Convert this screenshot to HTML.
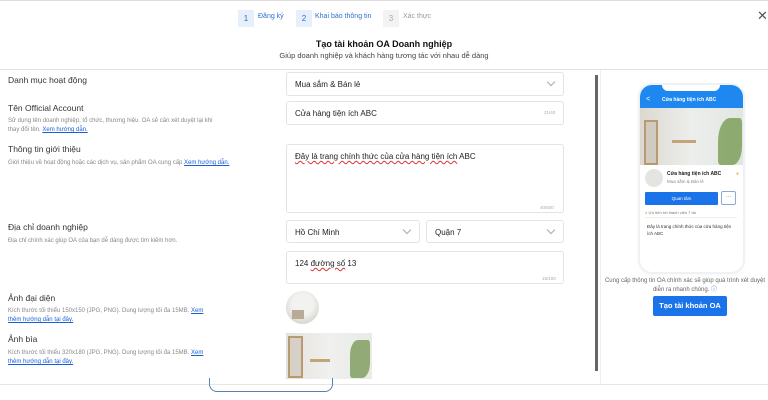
<!DOCTYPE html>
<html><head><meta charset="utf-8"><style>
*{margin:0;padding:0;box-sizing:border-box}
body{width:768px;height:400px;overflow:hidden;background:#fff;font-family:"Liberation Sans","Noto Sans CJK SC",sans-serif;color:#333;position:relative}
.a{position:absolute}
.lbl{font-size:8.5px;color:#333}
.desc{font-size:6px;color:#888;line-height:9px}
.desc u{color:#1a5fd6}
.box{border:1px solid #e3e3e3;border-radius:3px;background:#fff}
.txt{font-size:8px;color:#222}
.chev{width:6px;height:6px;border-right:1px solid #aaa;border-bottom:1px solid #aaa;transform:rotate(45deg)}
.cnt{font-size:4.5px;color:#aaa}
.wavy{text-decoration:underline wavy #d33;text-decoration-thickness:0.6px}
.sb{position:absolute;top:10px;width:16px;height:17px;font-size:8px;text-align:center;line-height:17px}
.st{position:absolute;top:13px;font-size:7px}
</style></head><body>
<div class="a" style="left:0;top:0;width:768px;height:1px;background:#ddd"></div>
<!-- steps -->
<div class="sb" style="left:238px;background:#e6f0fb;color:#2e6fd0">1</div>
<div class="st" style="left:258px;color:#2e6fd0">Đăng ký</div>
<div class="sb" style="left:296px;background:#e6f0fb;color:#2e6fd0">2</div>
<div class="st" style="left:315px;color:#2e6fd0">Khai báo thông tin</div>
<div class="sb" style="left:383px;background:#f3f3f3;color:#aaa">3</div>
<div class="st" style="left:403px;color:#999">Xác thực</div>
<div class="a" style="left:757px;top:8px;font-size:13px;color:#555">✕</div>
<div class="a" style="left:0;top:39px;width:768px;text-align:center;font-size:9px;font-weight:bold;color:#111">Tạo tài khoản OA Doanh nghiệp</div>
<div class="a" style="left:0;top:51px;width:768px;text-align:center;font-size:7.5px;color:#444">Giúp doanh nghiệp và khách hàng tương tác với nhau dễ dàng</div>
<div class="a" style="left:0;top:69px;width:768px;height:1px;background:#e0e0e0"></div>
<!-- left form -->
<div class="a lbl" style="left:8px;top:75px">Danh mục hoạt động</div>
<div class="a box" style="left:286px;top:72px;width:278px;height:24px"></div>
<div class="a txt" style="left:295px;top:80px">Mua sắm &amp; Bán lẻ</div>
<div class="a chev" style="left:548px;top:79px"></div>

<div class="a lbl" style="left:8px;top:103px">Tên Official Account</div>
<div class="a desc" style="left:8px;top:117px;width:215px">Sử dụng tên doanh nghiệp, tổ chức, thương hiệu. OA sẽ cần xét duyệt lại khi thay đổi tên. <u>Xem hướng dẫn.</u></div>
<div class="a box" style="left:286px;top:101px;width:278px;height:24px"></div>
<div class="a txt" style="left:295px;top:109px">Cửa hàng tiện ích ABC</div>
<div class="a cnt" style="left:544px;top:110px">21/40</div>

<div class="a lbl" style="left:8px;top:144px">Thông tin giới thiệu</div>
<div class="a desc" style="left:8px;top:159px">Giới thiệu về hoạt động hoặc các dịch vụ, sản phẩm OA cung cấp <u>Xem hướng dẫn.</u></div>
<div class="a box" style="left:286px;top:144px;width:278px;height:69px"></div>
<div class="a txt" style="left:295px;top:152px"><span class="wavy">Đây là trang chính thức của cửa hàng tiện ích</span> ABC</div>
<div class="a cnt" style="left:540px;top:205px">40/500</div>

<div class="a lbl" style="left:8px;top:222px">Địa chỉ doanh nghiệp</div>
<div class="a desc" style="left:8px;top:237px">Địa chỉ chính xác giúp OA của bạn dễ dàng được tìm kiếm hơn.</div>
<div class="a box" style="left:286px;top:220px;width:134px;height:23px"></div>
<div class="a txt" style="left:295px;top:228px">Hồ Chí Minh</div>
<div class="a chev" style="left:404px;top:227px"></div>
<div class="a box" style="left:426px;top:220px;width:138px;height:23px"></div>
<div class="a txt" style="left:435px;top:228px">Quận 7</div>
<div class="a chev" style="left:548px;top:227px"></div>
<div class="a box" style="left:286px;top:251px;width:278px;height:33px"></div>
<div class="a txt" style="left:295px;top:259px">124 <span class="wavy">đường số</span> 13</div>
<div class="a cnt" style="left:542px;top:276px">15/100</div>

<div class="a lbl" style="left:8px;top:293px">Ảnh đại diện</div>
<div class="a desc" style="left:8px;top:307px;width:210px">Kích thước tối thiểu 150x150 (JPG, PNG). Dung lượng tối đa 15MB. <u>Xem thêm hướng dẫn tại đây.</u></div>
<div class="a" style="left:286px;top:291px;width:33px;height:33px;border-radius:50%;background:radial-gradient(circle at 50% 40%,#f2f2f0 40%,#dcdcd6 70%,#c8c2b6)"></div>
<div class="a" style="left:292px;top:310px;width:12px;height:9px;background:#b8aa94"></div>

<div class="a lbl" style="left:8px;top:334px">Ảnh bìa</div>
<div class="a desc" style="left:8px;top:349px;width:210px">Kích thước tối thiểu 320x180 (JPG, PNG). Dung lượng tối đa 15MB. <u>Xem thêm hướng dẫn tại đây.</u></div>
<div class="a" style="left:286px;top:333px;width:86px;height:46px;background:linear-gradient(90deg,#e4e2de,#f0f0ee 50%,#e8ebe6)"></div>
<div class="a" style="left:288px;top:336px;width:15px;height:42px;border:2px solid #b89a70;background:#d6d0c6"></div>
<div class="a" style="left:310px;top:359px;width:20px;height:3px;background:#c4a57a"></div>
<div class="a" style="left:350px;top:340px;width:20px;height:38px;border-radius:40% 10% 40% 10%;background:#7a9a5a;opacity:.8"></div>

<!-- scrollbar -->
<div class="a" style="left:595px;top:75px;width:3px;height:296px;background:#666"></div>
<div class="a" style="left:600px;top:70px;width:1px;height:315px;background:#eee"></div>
<div class="a" style="left:0;top:384px;width:768px;height:1px;background:#e6e6e6"></div>
<div class="a" style="left:209px;top:378px;width:124px;height:14px;border:1px solid #5a7fb0;border-top:none;border-radius:0 0 8px 8px"></div>

<!-- phone -->
<div class="a" style="left:640px;top:85px;width:103px;height:187px;border-radius:12px;background:#fff;box-shadow:0 0 0 2px #eef2f7,0 1px 4px rgba(0,0,0,.1);overflow:hidden">
 <div style="height:23px;background:#1e88f0;position:relative">
  <div style="position:absolute;left:22px;top:0;width:58px;height:6px;background:#fff;border-radius:0 0 6px 6px"></div>
  <div style="position:absolute;left:6px;top:11px;font-size:7px;color:#fff">&lt;</div>
  <div style="position:absolute;left:22px;top:12px;font-size:5px;color:#fff;font-weight:bold">Cửa hàng tiện ích ABC</div>
 </div>
 <div style="height:57px;background:linear-gradient(90deg,#dcd8d0,#eceeec 50%,#e2e6e0);position:relative">
  <div style="position:absolute;left:4px;top:12px;width:14px;height:45px;border:2px solid #b89a70;background:#d0cac0"></div>
  <div style="position:absolute;left:32px;top:32px;width:24px;height:3px;background:#c4a57a"></div>
  <div style="position:absolute;left:78px;top:10px;width:24px;height:47px;border-radius:50% 10% 40% 10%;background:#7ea05c;opacity:.85"></div>
 </div>
 <div style="position:absolute;left:5px;top:84px;width:18px;height:18px;border-radius:50%;background:#e4e4e0"></div>
 <div style="position:absolute;left:27px;top:86px;font-size:5px;font-weight:bold;color:#222">Cửa hàng tiện ích ABC</div>
 <div style="position:absolute;left:96px;top:86px;font-size:5px;color:#f3b43a">●</div>
 <div style="position:absolute;left:27px;top:94px;font-size:4.5px;color:#888">Mua sắm &amp; Bán lẻ</div>
 <div style="position:absolute;left:5px;top:107px;width:73px;height:13px;background:#1a73e8;border-radius:1px;color:#fff;font-size:4.5px;text-align:center;line-height:13px">Quan tâm</div>
 <div style="position:absolute;left:81px;top:106px;width:15px;height:14px;border:1px solid #8aa8d8;border-radius:2px;font-size:5px;text-align:center;line-height:11px;color:#555">···</div>
 <div style="position:absolute;left:5px;top:125px;font-size:4px;color:#777"><span style="color:#f3b43a">●</span> Ưu tiên tới thành viên 7 tài</div>
 <div style="position:absolute;left:5px;top:132px;width:92px;height:1px;background:#eee"></div>
 <div style="position:absolute;left:7px;top:138px;width:86px;font-size:4.5px;line-height:7px;color:#333">Đây là trang chính thức của cửa hàng tiện ích ABC</div>
</div>
<div class="a" style="left:602px;top:277px;width:166px;text-align:center;font-size:6px;color:#666;line-height:9px">Cung cấp thông tin OA chính xác sẽ giúp quá trình xét duyệt diễn ra nhanh chóng. <span style="color:#2e6fd0">ⓘ</span></div>
<div class="a" style="left:653px;top:296px;width:74px;height:20px;background:#1a73e8;border-radius:2px;color:#fff;font-size:7.5px;font-weight:bold;text-align:center;line-height:20px">Tạo tài khoản OA</div>
</body></html>
